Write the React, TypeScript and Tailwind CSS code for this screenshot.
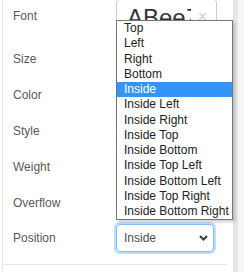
const positions = [
  "Top",
  "Left",
  "Right",
  "Bottom",
  "Inside",
  "Inside Left",
  "Inside Right",
  "Inside Top",
  "Inside Bottom",
  "Inside Top Left",
  "Inside Bottom Left",
  "Inside Top Right",
  "Inside Bottom Right",
]

function Label({ text }: { text: string }) {
  return <div className="w-[103px] shrink-0 flex items-center text-[12px] text-[#595959]">{text}</div>
}

export default function App() {
  return (
    <div className="relative flex h-[272px] w-[244px] overflow-hidden bg-white font-['Liberation_Sans',Arial,sans-serif]">
      <div className="w-[2px] shrink-0" />
      <div className="w-px shrink-0 bg-[#e6e6e6]" />
      <div className="flex w-[230px] shrink-0 flex-col">
        <div className="flex h-[32px] pl-[10px]">
          <Label text="Font" />
          <div className="-mt-[2px] flex h-[42px] w-[101px] items-start justify-between rounded-[5px] border border-[#cccccc] pl-[10px] pr-[9px] pt-[6px]">
            <span className="w-[64px] overflow-hidden whitespace-nowrap text-[24px] leading-[26px] text-[#333]">ABeeZee</span>
            <span className="pt-[2px] text-[16px] leading-[20px] text-[#cccccc]">×</span>
          </div>
        </div>
        <div className="mt-[9px] flex h-[36px] pl-[10px]">
          <Label text="Size" />
        </div>
        <div className="flex h-[36px] pl-[10px]">
          <Label text="Color" />
        </div>
        <div className="flex h-[36px] pl-[10px]">
          <Label text="Style" />
        </div>
        <div className="flex h-[36px] pl-[10px]">
          <Label text="Weight" />
        </div>
        <div className="flex h-[36px] pl-[10px]">
          <Label text="Overflow" />
        </div>
        <div className="flex h-[34px] items-center pl-[10px]">
          <Label text="Position" />
          <div className="flex h-[28px] w-[98px] items-center justify-between rounded-[4px] border border-[#80bdff] pl-[7px] pr-[5px] shadow-[0_0_0_2px_rgba(0,123,255,0.25)]">
            <span className="text-[12px] text-[#495057]">Inside</span>
            <svg width="9" height="6" viewBox="0 0 9 6" fill="none">
              <path d="M1 1l3.5 3.5L8 1" stroke="#343a40" strokeWidth="2" />
            </svg>
          </div>
        </div>
        <div className="mr-[6px] mt-[9px] h-px bg-[#e6e6e6]" />
      </div>
      <div className="w-[5px] shrink-0 bg-[#e6e6e6]" />
      <div className="flex-1 bg-[#f6f6f6]" />

      <div className="absolute left-[116px] top-[20px] w-[117px] border border-[#767676] bg-white shadow-[2px_2px_3px_rgba(0,0,0,0.2)]">
        {positions.map((p) => (
          <div
            key={p}
            className={
              p === "Inside"
                ? "h-[15.25px] bg-[#3494f7] pl-[7px] text-[12px] leading-[15px] text-white"
                : "h-[15.25px] pl-[7px] text-[12px] leading-[15px] text-[#222]"
            }
          >
            {p}
          </div>
        ))}
      </div>
    </div>
  )
}
